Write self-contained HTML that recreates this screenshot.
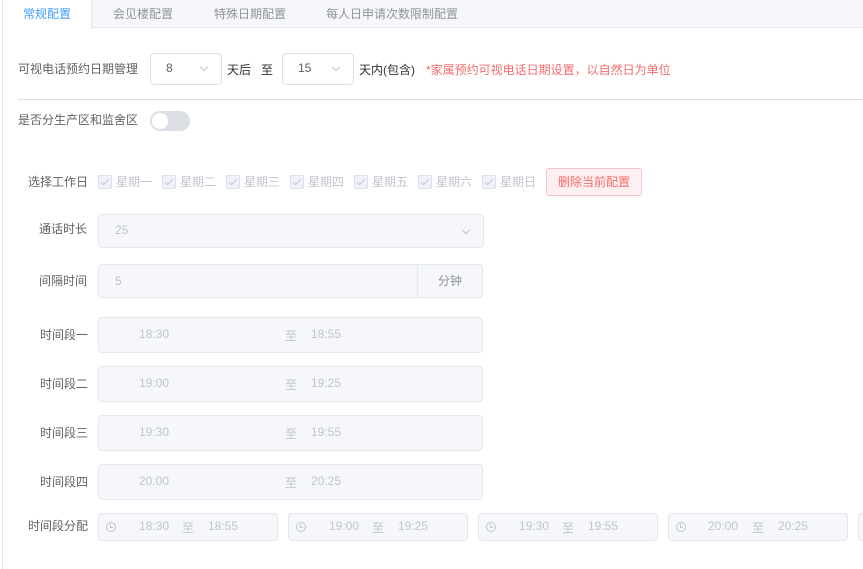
<!DOCTYPE html>
<html><head><meta charset="utf-8"><style>
*{box-sizing:border-box;margin:0;padding:0}
body{width:863px;height:569px;background:#fff;position:relative;overflow:hidden;font-family:"Liberation Sans","Noto Sans CJK SC",sans-serif;font-size:12px;color:#606266}
.a{position:absolute;white-space:nowrap}
.lbl{position:absolute;white-space:nowrap;font-size:12px;color:#606266;line-height:16px}
.box{position:absolute;border:1px solid #dcdfe6;border-radius:4px;background:#fff}
.dis{position:absolute;border:1px solid #e4e7ed;border-radius:4px;background:#f5f7fa;color:#c0c4cc}
.chev{position:absolute;width:6px;height:6px;border-right:1px solid #c0c4cc;border-bottom:1px solid #c0c4cc;transform:rotate(45deg)}
.cb{position:absolute;width:14px;height:14px;border:1px solid #dcdfe6;border-radius:2px;background:#edf2fc}
.cb:after{content:"";position:absolute;left:4px;top:1px;width:3px;height:7px;border-right:1px solid #c0c4cc;border-bottom:1px solid #c0c4cc;transform:rotate(45deg)}
.ck{position:absolute;font-size:12px;color:#c0c4cc;line-height:16px}
.clk{position:absolute;width:10px;height:10px;border:1px solid #c0c4cc;border-radius:50%}
.clk:after{content:"";position:absolute;left:3px;top:1px;width:2px;height:3px;border-left:1px solid #c0c4cc;border-bottom:1px solid #c0c4cc}
</style></head><body>
<div class="a" style="left:2px;top:0;width:1px;height:569px;background:#e4e7ed"></div>
<div class="a" style="left:3px;top:0;width:860px;height:28px;background:#f5f7fa;border-bottom:1px solid #e4e7ed"></div>
<div class="a" style="left:3px;top:0;width:89px;height:29px;background:#fff;border-right:1px solid #e4e7ed"></div>
<div class="a" style="left:23px;top:5px;color:#409eff;font-size:12px">常规配置</div>
<div class="a" style="left:113px;top:5px;color:#909399">会见楼配置</div>
<div class="a" style="left:214px;top:5px;color:#909399">特殊日期配置</div>
<div class="a" style="left:326px;top:5px;color:#909399">每人日申请次数限制配置</div>

<div class="lbl" style="left:18px;top:61px">可视电话预约日期管理</div>
<div class="box" style="left:150px;top:53px;width:72px;height:32px"></div>
<div class="a" style="left:166px;top:61px;color:#606266">8</div>
<div class="chev" style="left:201px;top:64px"></div>
<div class="a" style="left:227px;top:61px;color:#303133">天后</div>
<div class="a" style="left:261px;top:61px;color:#303133">至</div>
<div class="box" style="left:282px;top:53px;width:72px;height:32px"></div>
<div class="a" style="left:298px;top:61px">15</div>
<div class="chev" style="left:333px;top:64px"></div>
<div class="a" style="left:359px;top:61px;color:#303133">天内(包含)</div>
<div class="a" style="left:426px;top:61px;color:#f56c6c">*家属预约可视电话日期设置，以自然日为单位</div>
<div class="a" style="left:18px;top:99px;width:845px;height:1px;background:#dcdfe6"></div>

<div class="lbl" style="left:18px;top:112px">是否分生产区和监舍区</div>
<div class="a" style="left:150px;top:111px;width:40px;height:20px;border-radius:10px;background:#dcdfe6"></div>
<div class="a" style="left:152px;top:113px;width:16px;height:16px;border-radius:50%;background:#fff"></div>

<div class="lbl" style="left:28px;top:174px">选择工作日</div>
<div class="cb" style="left:98px;top:175px"></div><div class="ck" style="left:116px;top:174px">星期一</div>
<div class="cb" style="left:162px;top:175px"></div><div class="ck" style="left:180px;top:174px">星期二</div>
<div class="cb" style="left:226px;top:175px"></div><div class="ck" style="left:244px;top:174px">星期三</div>
<div class="cb" style="left:290px;top:175px"></div><div class="ck" style="left:308px;top:174px">星期四</div>
<div class="cb" style="left:354px;top:175px"></div><div class="ck" style="left:372px;top:174px">星期五</div>
<div class="cb" style="left:418px;top:175px"></div><div class="ck" style="left:436px;top:174px">星期六</div>
<div class="cb" style="left:482px;top:175px"></div><div class="ck" style="left:500px;top:174px">星期日</div>
<div class="a" style="left:546px;top:168px;width:96px;height:28px;border:1px solid #fbc4c4;background:#fef0f0;border-radius:3px;color:#f56c6c;text-align:center;line-height:26px">删除当前配置</div>

<div class="lbl" style="left:39px;top:221px">通话时长</div>
<div class="dis" style="left:98px;top:214px;width:386px;height:34px"></div>
<div class="a" style="left:115px;top:223px;color:#c0c4cc">25</div>
<div class="chev" style="left:463px;top:227px"></div>

<div class="lbl" style="left:39px;top:273px">间隔时间</div>
<div class="dis" style="left:98px;top:264px;width:385px;height:34px"></div>
<div class="a" style="left:417px;top:264px;width:66px;height:34px;border:1px solid #e4e7ed;border-radius:0 4px 4px 0;background:#f5f7fa;color:#909399;text-align:center;line-height:32px">分钟</div>
<div class="a" style="left:115px;top:274px;color:#c0c4cc">5</div>

<div class="lbl" style="left:40px;top:327px">时间段一</div>
<div class="dis" style="left:98px;top:317px;width:385px;height:36px"></div>
<div class="a" style="left:139px;top:327px;color:#c0c4cc">18:30</div><div class="a" style="left:285px;top:327px;color:#c0c4cc">至</div><div class="a" style="left:311px;top:327px;color:#c0c4cc">18:55</div>
<div class="lbl" style="left:40px;top:376px">时间段二</div>
<div class="dis" style="left:98px;top:366px;width:385px;height:36px"></div>
<div class="a" style="left:139px;top:376px;color:#c0c4cc">19:00</div><div class="a" style="left:285px;top:376px;color:#c0c4cc">至</div><div class="a" style="left:311px;top:376px;color:#c0c4cc">19:25</div>
<div class="lbl" style="left:40px;top:425px">时间段三</div>
<div class="dis" style="left:98px;top:415px;width:385px;height:36px"></div>
<div class="a" style="left:139px;top:425px;color:#c0c4cc">19:30</div><div class="a" style="left:285px;top:425px;color:#c0c4cc">至</div><div class="a" style="left:311px;top:425px;color:#c0c4cc">19:55</div>
<div class="lbl" style="left:40px;top:474px">时间段四</div>
<div class="dis" style="left:98px;top:464px;width:385px;height:36px"></div>
<div class="a" style="left:139px;top:474px;color:#c0c4cc">20:00</div><div class="a" style="left:285px;top:474px;color:#c0c4cc">至</div><div class="a" style="left:311px;top:474px;color:#c0c4cc">20:25</div>

<div class="lbl" style="left:28px;top:518px">时间段分配</div>
<div class="dis" style="left:98px;top:513px;width:180px;height:28px"></div>
<div class="clk" style="left:106px;top:522px"></div>
<div class="a" style="left:139px;top:519px;color:#c0c4cc">18:30</div><div class="a" style="left:182px;top:519px;color:#c0c4cc">至</div><div class="a" style="left:208px;top:519px;color:#c0c4cc">18:55</div>
<div class="dis" style="left:288px;top:513px;width:180px;height:28px"></div>
<div class="clk" style="left:296px;top:522px"></div>
<div class="a" style="left:329px;top:519px;color:#c0c4cc">19:00</div><div class="a" style="left:372px;top:519px;color:#c0c4cc">至</div><div class="a" style="left:398px;top:519px;color:#c0c4cc">19:25</div>
<div class="dis" style="left:478px;top:513px;width:180px;height:28px"></div>
<div class="clk" style="left:486px;top:522px"></div>
<div class="a" style="left:519px;top:519px;color:#c0c4cc">19:30</div><div class="a" style="left:562px;top:519px;color:#c0c4cc">至</div><div class="a" style="left:588px;top:519px;color:#c0c4cc">19:55</div>
<div class="dis" style="left:668px;top:513px;width:180px;height:28px"></div>
<div class="clk" style="left:676px;top:522px"></div>
<div class="a" style="left:708px;top:519px;color:#c0c4cc">20:00</div><div class="a" style="left:752px;top:519px;color:#c0c4cc">至</div><div class="a" style="left:778px;top:519px;color:#c0c4cc">20:25</div>
<div class="dis" style="left:858px;top:513px;width:180px;height:28px"></div>
</body></html>
